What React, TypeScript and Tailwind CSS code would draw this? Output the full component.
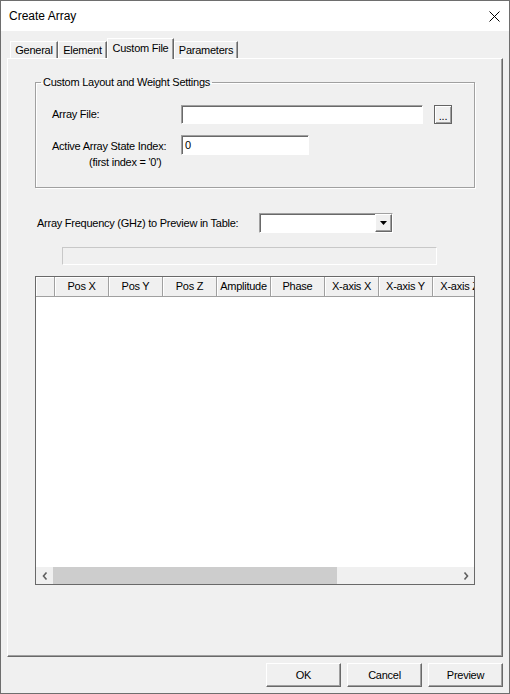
import React from 'react';

const raised =
  'border border-t-white border-l-white border-r-[#696969] border-b-[#696969] shadow-[inset_-1px_-1px_0_#a0a0a0]';
const sunken =
  'border border-t-[#a0a0a0] border-l-[#a0a0a0] border-r-white border-b-white shadow-[inset_1px_1px_0_#696969]';

function Tab({ label, active, width }: { label: string; active?: boolean; width: string }) {
  return (
    <div
      className={
        'flex items-center justify-center border border-b-0 border-t-white border-l-white border-r-[#696969] shadow-[inset_-1px_0_0_#a0a0a0] bg-[#f0f0f0] ' +
        width +
        (active ? ' h-[21px] -mb-px relative z-10 pb-[2px]' : ' h-[17px]')
      }
    >
      {label}
    </div>
  );
}

function PushButton({ label }: { label: string }) {
  return (
    <button className={'w-[75px] h-[24px] bg-[#f0f0f0] flex items-center justify-center ' + raised}>
      {label}
    </button>
  );
}

const columns = ['Pos X', 'Pos Y', 'Pos Z', 'Amplitude', 'Phase', 'X-axis X', 'X-axis Y', 'X-axis Z'];

export default function App() {
  return (
    <div className="w-[510px] h-[694px] flex flex-col border border-[#6e6e6e] bg-[#f0f0f0] font-['Liberation_Sans',Arial,sans-serif] text-[11px] leading-[13px] tracking-[-0.25px] text-black overflow-hidden">
      {/* Title bar */}
      <div className="h-[30px] shrink-0 bg-white flex items-center justify-between pl-[8px] pr-[9px]">
        <span className="text-[12px] tracking-normal">Create Array</span>
        <svg width="11" height="11" viewBox="0 0 11 11">
          <path d="M0.5 0.5 L10.5 10.5 M10.5 0.5 L0.5 10.5" stroke="#000" strokeWidth="1" />
        </svg>
      </div>

      <div className="flex-1 flex flex-col px-[6px] pt-[6px]">
        {/* Tab strip */}
        <div className="h-[21px] flex items-end pl-[3px]">
          <Tab label="General" width="w-[48px]" />
          <Tab label="Element" width="w-[49px]" />
          <Tab label="Custom File" width="w-[67px]" active />
          <Tab label="Parameters" width="w-[64px]" />
        </div>

        {/* Tab page */}
        <div className="h-[599px] border border-t-white border-l-white border-r-[#696969] border-b-[#696969] shadow-[inset_-1px_-1px_0_#a0a0a0] flex flex-col">
          <fieldset className="ml-[27px] mt-[17px] w-[440px] h-[112px] border border-[#a0a0a0] shadow-[1px_1px_0_#fff,inset_1px_1px_0_#fff] pt-[16px]">
            <legend className="ml-[5px] px-[2px]">Custom Layout and Weight Settings</legend>

            <div className="pl-[16px]">
              <div className="flex items-center">
                <span className="w-[129px]">Array File:</span>
                <div className={'w-[242px] h-[19px] bg-white ' + sunken} />
                <button className="ml-[11px] w-[18px] h-[19px] border border-[#646464] bg-[#f0f0f0] shadow-[inset_1px_1px_0_#fff,inset_-1px_-1px_0_#a0a0a0] flex items-end justify-center pb-[3px] leading-[8px]">
                  ...
                </button>
              </div>

              <div className="flex items-start mt-[11px]">
                <div className="w-[129px] pt-[5px] flex flex-col">
                  <span>Active Array State Index:</span>
                  <span className="pl-[37px] mt-[3px]">(first index = '0')</span>
                </div>
                <div className={'w-[128px] h-[20px] bg-white pl-[3px] flex items-center ' + sunken}>0</div>
              </div>
            </div>
          </fieldset>

          {/* Frequency selection */}
          <div className="flex items-center ml-[29px] mt-[25px]">
            <span className="w-[222px]">Array Frequency (GHz) to Preview in Table:</span>
            <div className={'w-[134px] h-[20px] bg-white flex justify-end items-stretch ' + sunken}>
              <div className={'w-[17px] bg-[#f0f0f0] flex items-center justify-center ' + raised}>
                <svg width="7" height="4" viewBox="0 0 7 4">
                  <path d="M0 0 H7 L3.5 4 Z" fill="#000" />
                </svg>
              </div>
            </div>
          </div>

          <div className="ml-[54px] mt-[14px] w-[375px] h-[18px] border border-t-[#c8c8c8] border-l-[#c8c8c8] border-r-white border-b-white" />

          {/* Element table */}
          <div className="ml-[27px] mt-[11px] w-[440px] h-[309px] border border-[#696969] bg-white flex flex-col">
            <div className="h-[20px] flex bg-[#f0f0f0] border-b border-[#a0a0a0] overflow-hidden">
              <div className="w-[19px] shrink-0 border-r border-[#a0a0a0] shadow-[inset_1px_1px_0_#fff]" />
              {columns.map((c) => (
                <div
                  key={c}
                  className="w-[54px] shrink-0 border-r border-[#a0a0a0] shadow-[inset_1px_1px_0_#fff] flex items-center justify-center whitespace-nowrap overflow-hidden"
                >
                  {c}
                </div>
              ))}
            </div>
            <div className="flex-1" />
            <div className="h-[17px] flex bg-[#f0f0f0]">
              <div className="w-[17px] flex items-center justify-center">
                <svg width="6" height="8" viewBox="0 0 6 8">
                  <path d="M4.5 0.5 L1.5 4 L4.5 7.5" stroke="#606060" strokeWidth="1.6" fill="none" />
                </svg>
              </div>
              <div className="flex-1 flex items-stretch">
                <div className="w-[284px] bg-[#cdcdcd]" />
              </div>
              <div className="w-[17px] flex items-center justify-center">
                <svg width="6" height="8" viewBox="0 0 6 8">
                  <path d="M1.5 0.5 L4.5 4 L1.5 7.5" stroke="#606060" strokeWidth="1.6" fill="none" />
                </svg>
              </div>
            </div>
          </div>
        </div>

        {/* Dialog buttons */}
        <div className="flex justify-end gap-[6px] mt-[6px]">
          <PushButton label="OK" />
          <PushButton label="Cancel" />
          <PushButton label="Preview" />
        </div>
      </div>
    </div>
  );
}
